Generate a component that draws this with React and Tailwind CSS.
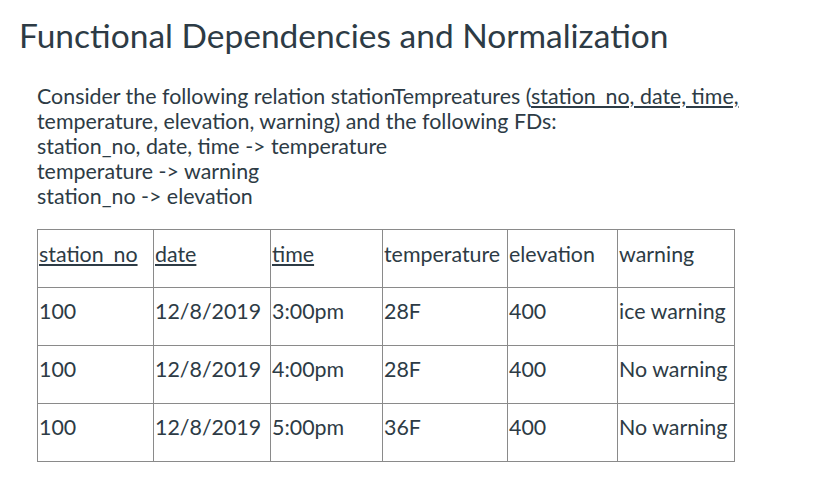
import React from "react";

const cols = [
  { label: "station_no", key: true, w: "w-[116px]" },
  { label: "date", key: true, w: "w-[117px]" },
  { label: "time", key: true, w: "w-[112px]" },
  { label: "temperature", w: "w-[125px]" },
  { label: "elevation", w: "w-[110px]" },
  { label: "warning", w: "w-[117px]" },
];

const rows = [
  ["100", "12/8/2019", "3:00pm", "28F", "400", "ice warning"],
  ["100", "12/8/2019", "4:00pm", "28F", "400", "No warning"],
  ["100", "12/8/2019", "5:00pm", "36F", "400", "No warning"],
];

const App = () => {
  return (
    <div className="w-[832px] h-[477px] bg-white text-[#2d3b45] font-['Lato',sans-serif] overflow-hidden">
      <h1 className="pl-[19px] pt-[14px] text-[33.5px] leading-[42px] font-normal whitespace-nowrap">
        Functional Dependencies and Normalization
      </h1>
      <p className="ml-[37px] mt-[28px] text-[21.4px] leading-[25px] whitespace-nowrap">
        Consider the following relation stationTempreatures (
        <span className="underline">station_no, date, time,</span>
        <br />
        temperature, elevation, warning) and the following FDs:
        <br />
        station_no, date, time -&gt; temperature
        <br />
        temperature -&gt; warning
        <br />
        station_no -&gt; elevation
      </p>
      <table className="ml-[37px] mt-[20px] table-fixed border-collapse text-[21.4px] w-[697px]">
        <thead>
          <tr className="h-[57.5px]">
            {cols.map((c) => (
              <th
                key={c.label}
                className={`${c.w} border border-[#8a8a8a] px-[1px] pb-[9px] text-left font-normal align-middle whitespace-nowrap`}
              >
                <span className={c.key ? "underline" : ""}>{c.label}</span>
              </th>
            ))}
          </tr>
        </thead>
        <tbody>
          {rows.map((r, i) => (
            <tr key={i} className="h-[58px]">
              {r.map((v, j) => (
                <td key={j} className="border border-[#8a8a8a] px-[1px] pb-[9px] align-middle whitespace-nowrap">
                  {v}
                </td>
              ))}
            </tr>
          ))}
        </tbody>
      </table>
    </div>
  );
};

export default App;
